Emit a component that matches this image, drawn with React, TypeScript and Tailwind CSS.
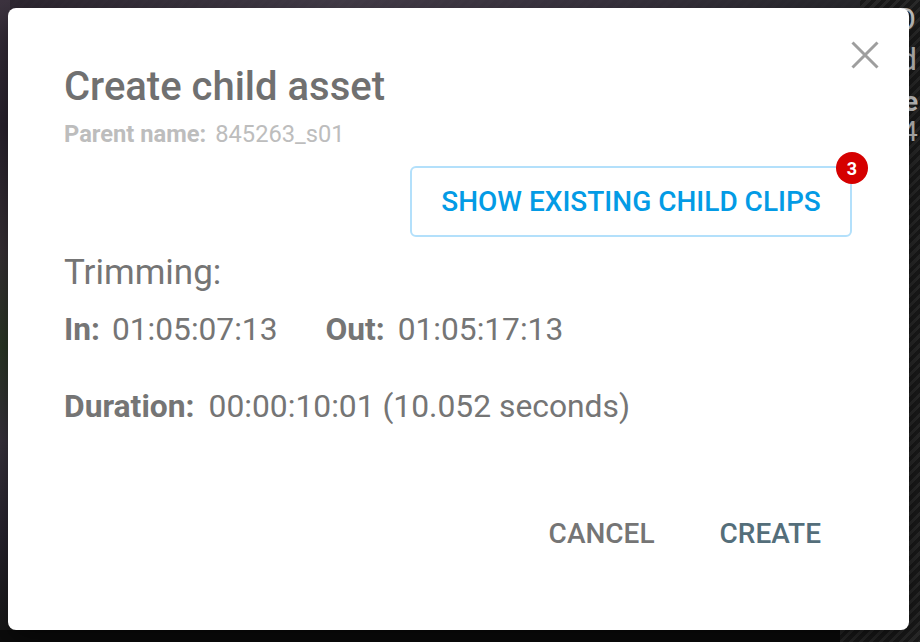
import React from "react";

export default function App() {
  return (
    <div className="relative w-[920px] h-[642px] overflow-hidden bg-[#161616] font-['Roboto',sans-serif]">
      {/* background stripes */}
      <div className="absolute inset-0 bg-[repeating-linear-gradient(135deg,#1a1a1a_0px,#1a1a1a_4px,#2a2a2a_4px,#2a2a2a_7px)]" />
      {/* blurred image hints */}
      <div className="absolute left-0 top-0 w-[860px] h-[24px] bg-[linear-gradient(90deg,#2f2833,#4a4250_40%,#3e3744_70%,#2a2a30)] opacity-90" />
      <div className="absolute left-0 top-0 w-[10px] h-[630px] bg-[linear-gradient(180deg,#3d3440,#2b2430_20%,#3a3338_40%,#2d3a28_55%,#3b3540_70%,#2a2631_85%,#1a1a1a)]" />
      <div className="absolute left-0 bottom-0 w-[840px] h-[12px] bg-[#0c0c0c]" />
      {/* text behind dialog on the right */}
      <div className="absolute left-[894px] top-[3px] text-[32px] leading-none text-[#c7c7c7]">O</div>
      <div className="absolute left-[899px] top-[43px] text-[32px] leading-none text-[#c7c7c7]">d</div>
      <div className="absolute left-[903px] top-[88px] text-[28px] leading-none font-bold text-[#d0d0d0]">e</div>
      <div className="absolute left-[902px] top-[118px] text-[28px] leading-none text-[#c7c7c7]">4</div>

      {/* dialog */}
      <div className="absolute left-[8px] top-[8px] w-[901px] h-[622px] rounded-[8px] bg-white shadow-[0_10px_30px_rgba(0,0,0,0.5)]">
        <button className="absolute left-[843px] top-[33px] w-[28px] h-[28px]">
          <svg viewBox="0 0 28 28" width="28" height="28">
            <path d="M1.5 1.5 L26.5 26.5 M26.5 1.5 L1.5 26.5" stroke="#9e9e9e" strokeWidth="3" />
          </svg>
        </button>

        <div className="flex flex-col pl-[56px] pr-[56px] pt-[59px]">
          <div className="text-[40px] leading-none font-medium text-[#707070]">Create child asset</div>
          <div className="mt-[15px] text-[23.7px] leading-[24px] text-[#bdbdbd]">
            <span className="font-bold">Parent name:</span>
            <span className="ml-[9px]">845263_s01</span>
          </div>
          <div className="mt-[20px] flex justify-end pr-[1px]">
            <div className="relative">
              <button className="w-[442px] h-[71px] rounded-[6px] border-2 border-[#b3e0fb] text-[28px] font-medium text-[#039be5]">
                SHOW EXISTING CHILD CLIPS
              </button>
              <div className="absolute right-[-16px] top-[-14px] w-[32px] h-[32px] rounded-full bg-[#d50000] text-white text-[18px] font-bold flex items-center justify-center">
                3
              </div>
            </div>
          </div>
          <div className="mt-[18px] text-[35px] leading-none text-[#757575]">Trimming:</div>
          <div className="mt-[24px] flex text-[31.7px] leading-[32px] text-[#757575]">
            <span className="font-bold">In:</span>
            <span className="ml-[12px]">01:05:07:13</span>
            <span className="ml-[48px] font-bold">Out:</span>
            <span className="ml-[13px]">01:05:17:13</span>
          </div>
          <div className="mt-[44px] flex text-[31.8px] leading-[32px] text-[#757575]">
            <span className="font-bold">Duration:</span>
            <span className="ml-[14px]">00:00:10:01 (10.052 seconds)</span>
          </div>
          <div className="mt-[98px] flex justify-end gap-[65px] pr-[32px] text-[28px] leading-none font-medium">
            <button className="text-[#757575]">CANCEL</button>
            <button className="text-[#546e7a]">CREATE</button>
          </div>
        </div>
      </div>
    </div>
  );
}
